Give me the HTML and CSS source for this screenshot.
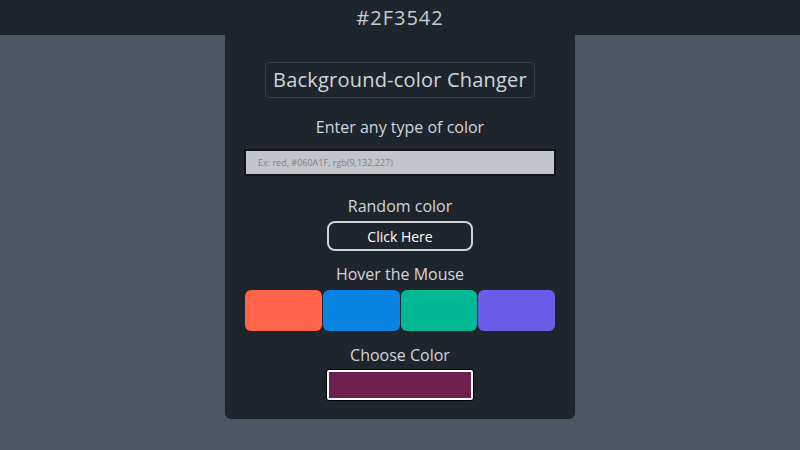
FILE: index.html
```html
<!DOCTYPE html>
<html lang="en">
<head>
  <meta charset="UTF-8">
  <title>Background-color Changer</title>
  <link rel="stylesheet" href="styles.css">
</head>
<body>
  <header class="top-bar">#2F3542</header>

  <main class="card">
    <h1 class="title">Background-color Changer</h1>

    <p class="label label-first">Enter any type of color</p>
    <input class="color-text" type="text" placeholder="Ex: red, #060A1F, rgb(9,132,227)">

    <p class="label">Random color</p>
    <button class="random-btn">Click Here</button>

    <p class="label">Hover the Mouse</p>
    <div class="swatches">
      <div class="swatch swatch-red"></div>
      <div class="swatch swatch-blue"></div>
      <div class="swatch swatch-green"></div>
      <div class="swatch swatch-purple"></div>
    </div>

    <p class="label">Choose Color</p>
    <div class="picker"></div>
  </main>
</body>
</html>
```

FILE: styles.css
```css
body {
  margin: 0;
  background-color: #4b5563;
  font-family: "Open Sans", sans-serif;
  color: #d2d6da;
}

.top-bar {
  height: 35px;
  line-height: 35px;
  background-color: #1f252d;
  text-align: center;
  font-size: 20px;
  letter-spacing: 1px;
  color: #c8ccd0;
}

.card {
  width: 350px;
  margin: 0 auto;
  padding: 27px 0 19px;
  background-color: #1f252d;
  border-radius: 0 0 6px 6px;
  display: flex;
  flex-direction: column;
  align-items: center;
}

.title {
  margin: 0;
  height: 34px;
  line-height: 34px;
  padding: 0 7px;
  border: 1px solid #3a4049;
  border-radius: 5px;
  font-size: 20px;
  font-weight: 400;
  letter-spacing: 0.2px;
  color: #d2d6da;
}

.label {
  margin: 13px 0 6px;
  font-size: 16px;
  line-height: 20px;
}

.label-first {
  margin-top: 19px;
  margin-bottom: 12px;
}

.color-text {
  box-sizing: border-box;
  width: 312px;
  height: 27px;
  padding: 0 12px;
  background-color: #c2c6cb;
  border: 2px solid #111418;
  font-family: inherit;
  font-size: 9px;
  margin-bottom: 7px;
}

.color-text::placeholder {
  color: #7d8289;
}

.random-btn {
  box-sizing: border-box;
  width: 146px;
  height: 30px;
  margin-top: -1px;
  background-color: transparent;
  border: 2px solid #cfd3d7;
  border-radius: 8px;
  color: #ffffff;
  font-family: inherit;
  font-size: 14px;
}

.swatches {
  display: flex;
  gap: 1px;
  width: 310px;
  margin-bottom: 1px;
}

.swatch {
  flex: 1;
  height: 41px;
  border-radius: 6px;
}

.swatch-red { background-color: #ff6348; }
.swatch-blue { background-color: #0984e3; }
.swatch-green { background-color: #00b894; }
.swatch-purple { background-color: #6c5ce7; }

.picker {
  box-sizing: border-box;
  width: 146px;
  height: 30px;
  margin-top: -1px;
  background-color: #6e1f4f;
  border: 2px solid #ffffff;
  border-radius: 2px;
  box-shadow: 0 0 0 1px #000000;
}
```
